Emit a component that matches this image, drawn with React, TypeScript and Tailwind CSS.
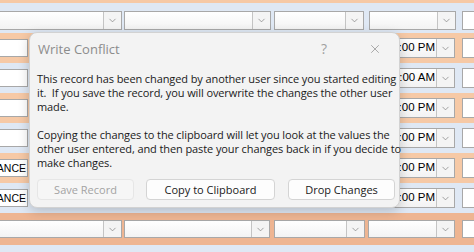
import { ChevronDown, X } from 'lucide-react'

const arial = { fontFamily: '"Liberation Sans", Arial, sans-serif' }

function Arrow() {
  return (
    <div className="w-[18px] h-full shrink-0 border-l border-[#c4c4c4] bg-[#f4f4f4] flex items-center justify-center">
      <ChevronDown className="w-[11px] h-[11px] text-[#7a7a7a]" strokeWidth={1.5} />
    </div>
  )
}

function Combo({ className, text }: { className: string; text?: string }) {
  return (
    <div className={`shrink-0 flex border border-[#a8a8a8] bg-gradient-to-b from-white to-[#f3f3f3] ${className}`}>
      <div className="flex-1 flex items-center justify-end pr-[1px] text-[11.5px] text-black leading-none overflow-hidden whitespace-nowrap" style={arial}>
        {text}
      </div>
      <Arrow />
    </div>
  )
}

function Box({ className, text }: { className: string; text?: string }) {
  return (
    <div className={`shrink-0 border border-[#a8a8a8] bg-white flex items-center justify-end text-[10.5px] text-black leading-none overflow-hidden whitespace-nowrap ${className}`} style={arial}>
      {text}
    </div>
  )
}

function TimeRow({ bg, time, left }: { bg: string; time: string; left?: string }) {
  return (
    <div className={`h-[30px] flex items-center ${bg}`}>
      <Box className="w-[120px] h-[18px] ml-[-92px] pr-[1px]" text={left} />
      <div className="w-[272px] shrink-0" />
      <Combo className="w-[155px] h-[20px]" text={time} />
      <Box className="w-[40px] h-[20px] ml-[7px]" />
    </div>
  )
}

export default function App() {
  const dlgFont = { fontFamily: '"Open Sans", "Noto Sans", sans-serif' }
  return (
    <div className="relative w-[474px] h-[252px] overflow-hidden bg-[#dfe8f4]">
      {/* form rows behind the dialog */}
      <div className="flex flex-col">
        <div className="h-[3px] bg-[#f6c9a6]" />
        <div className="h-[30px] flex pt-[8px] bg-[#dfe8f4]">
          <Combo className="w-[122px] h-[19px] border-l-0" />
          <Combo className="w-[147px] h-[19px] ml-[2px]" />
          <Combo className="w-[90px] h-[19px] ml-[3px]" />
          <Combo className="w-[87px] h-[19px] ml-[5px]" />
          <Box className="w-[40px] h-[19px] ml-[6px]" />
        </div>
        <TimeRow bg="bg-[#f6c9a6]" time="10:00 PM" />
        <TimeRow bg="bg-[#dfe8f4]" time="10:00 AM" />
        <TimeRow bg="bg-[#f6c9a6]" time="10:00 PM" />
        <TimeRow bg="bg-[#dfe8f4]" time="10:00 PM" />
        <TimeRow bg="bg-[#f6c9a6]" time="10:00 PM" left="DISTANCE" />
        <TimeRow bg="bg-[#dfe8f4]" time="10:00 PM" left="DISTANCE" />
        <div className="h-[32px] flex items-center bg-[#eeb592]">
          <Combo className="w-[122px] h-[18px] border-l-0" />
          <Combo className="w-[146px] h-[18px] ml-[2px]" />
          <Combo className="w-[91px] h-[18px] ml-[4px]" />
          <Combo className="w-[87px] h-[18px] ml-[3px]" />
          <Box className="w-[40px] h-[18px] ml-[7px]" />
        </div>
        <div className="h-[10px] bg-[#dfe8f4]" />
      </div>

      {/* Write Conflict dialog */}
      <div className="absolute left-[29px] top-[32px] w-[371px] h-[176px] rounded-[8px] border border-[#d2d2d2] bg-[#f3f3f3] shadow-[0_3px_12px_rgba(0,0,0,0.2)] flex flex-col" style={dlgFont}>
        <div className="h-[32px] flex items-center pl-[8px] pr-[17px]">
          <div className="flex-1 text-[13px] text-[#8c8c8c] leading-none">Write Conflict</div>
          <div className="text-[14px] text-[#a0a0a0] leading-none mr-[41px]">?</div>
          <X className="w-[14px] h-[14px] text-[#8a8a8a]" strokeWidth={1.2} />
        </div>
        <div className="px-[7px] pt-[7px] text-[11px] leading-[14px] tracking-[-0.1px] text-[#1a1a1a] whitespace-nowrap">
          <p>This record has been changed by another user since you started editing</p>
          <p>it.&nbsp; If you save the record, you will overwrite the changes the other user</p>
          <p>made.</p>
          <p className="mt-[14px]">Copying the changes to the clipboard will let you look at the values the</p>
          <p>other user entered, and then paste your changes back in if you decide to</p>
          <p>make changes.</p>
        </div>
        <div className="flex items-center mt-[9px] pl-[7px]">
          <button className="w-[97px] h-[21px] rounded-[4px] border border-[#e6e6e6] bg-[#f6f6f6] text-[11px] text-[#a3a3a3] leading-none">Save Record</button>
          <button className="w-[129px] h-[21px] ml-[12px] rounded-[4px] border border-[#d4d4d4] bg-[#fdfdfd] text-[11px] text-[#1a1a1a] leading-none">Copy to Clipboard</button>
          <button className="w-[107px] h-[21px] ml-[13px] rounded-[4px] border border-[#d4d4d4] bg-[#fdfdfd] text-[11px] text-[#1a1a1a] leading-none">Drop Changes</button>
        </div>
      </div>
    </div>
  )
}
